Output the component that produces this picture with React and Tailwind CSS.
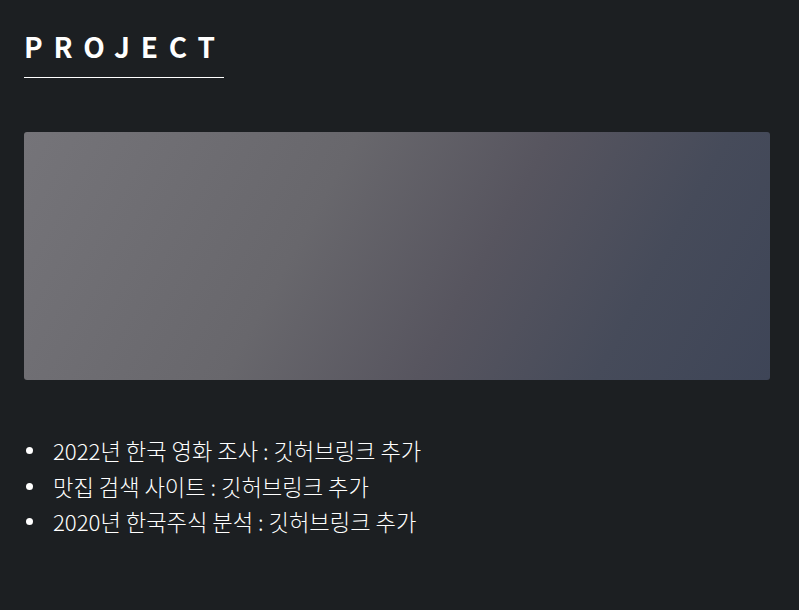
const items = [
  "2022년 한국 영화 조사 : 깃허브링크 추가",
  "맛집 검색 사이트 : 깃허브링크 추가",
  "2020년 한국주식 분석 : 깃허브링크 추가",
];

export default function App() {
  return (
    <div className="min-h-[610px] w-full bg-[#1c1f22] pl-6 pr-[29px] pt-[26px] pb-10 text-white" style={{ fontFamily: '"Noto Sans CJK KR", "Noto Sans", sans-serif' }}>
      <h2 className="w-[200px] border-b border-white pb-[11px] text-[28px] font-bold leading-[40px] tracking-[0.385em]">PROJECT</h2>
      <div className="mt-[54px] h-[248px] w-full rounded-[3px] bg-[linear-gradient(119deg,#757479_0%,#68676c_38%,#57555f_60%,#464b5a_80%,#3e4557_100%)]" />
      <ul className="mt-[53px] flex flex-col text-[22.2px] font-light leading-[35.5px]">
        {items.map((t) => (
          <li key={t} className="flex items-center">
            <span className="ml-[2px] mr-[20px] h-[7px] w-[7px] rounded-full bg-white" />
            <span>{t}</span>
          </li>
        ))}
      </ul>
    </div>
  );
}
